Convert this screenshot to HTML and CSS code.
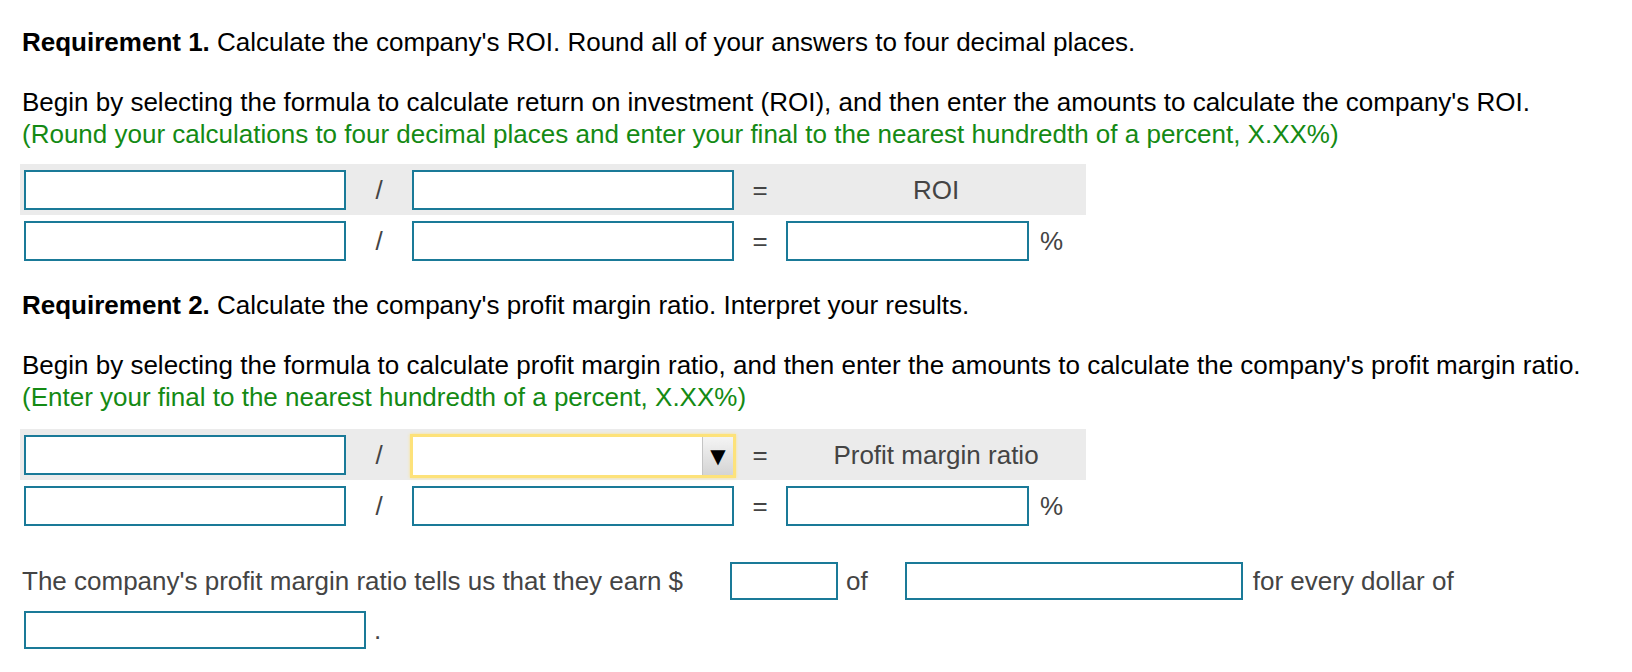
FILE: index.html
```html
<!DOCTYPE html>
<html>
<head>
	<meta charset="utf-8">
	<title>ROI and profit margin ratio</title>
	<link rel="stylesheet" href="styles.css">
</head>
<body>
<div class="page">
	<p class="req"><b>Requirement 1.</b> Calculate the company's ROI. Round all of your answers to four decimal places.</p>
	<p class="intro">Begin by selecting the formula to calculate return on investment (ROI), and then enter the amounts to calculate the company's ROI.</p>
	<p class="hint">(Round your calculations to four decimal places and enter your final to the nearest hundredth of a percent, X.XX%)</p>

	<table class="formula">
		<tr class="head">
			<td class="c1"><span class="box wide"></span></td>
			<td class="op">/</td>
			<td class="c3"><span class="box wide"></span></td>
			<td class="op eq">=</td>
			<td class="label" colspan="2">ROI</td>
		</tr>
		<tr>
			<td class="c1"><span class="box wide"></span></td>
			<td class="op">/</td>
			<td class="c3"><span class="box wide"></span></td>
			<td class="op eq">=</td>
			<td class="c5"><span class="box mid"></span></td>
			<td class="unit">%</td>
		</tr>
	</table>

	<p class="req req2"><b>Requirement 2.</b> Calculate the company's profit margin ratio. Interpret your results.</p>
	<p class="intro">Begin by selecting the formula to calculate profit margin ratio, and then enter the amounts to calculate the company's profit margin ratio.</p>
	<p class="hint">(Enter your final to the nearest hundredth of a percent, X.XX%)</p>

	<table class="formula second">
		<tr class="head">
			<td class="c1"><span class="box wide"></span></td>
			<td class="op">/</td>
			<td class="c3"><span class="select"><span class="arrow">&#9660;</span></span></td>
			<td class="op eq">=</td>
			<td class="label" colspan="2">Profit margin ratio</td>
		</tr>
		<tr>
			<td class="c1"><span class="box wide"></span></td>
			<td class="op">/</td>
			<td class="c3"><span class="box wide"></span></td>
			<td class="op eq">=</td>
			<td class="c5"><span class="box mid"></span></td>
			<td class="unit">%</td>
		</tr>
	</table>

	<p class="answer">The company's profit margin ratio tells us that they earn $<span class="box small"></span>of<span class="box long"></span>for every dollar of <span class="box last"></span><span class="dot">.</span></p>
</div>
</body>
</html>
```

FILE: styles.css
```css
body,p,table{margin:0;padding:0;}
body{background:#fff;color:#000;font:26px/32px "Liberation Sans",Arial,sans-serif;}
.page{padding:26px 22px 0;}
.req b{font-weight:700;}
.intro{margin-top:28px;}
.hint{color:#148a14;}
.req2{margin-top:23px;}

.formula{border-collapse:collapse;margin:14px 0 0 -2px;}
.formula.second{margin-top:16px;}
.formula td{padding:6px 0 5px;vertical-align:top;line-height:40px;}
.formula tr.head{background:#ebebeb;}
.formula .c1{width:322px;padding-left:4px;}
.formula .op{width:66px;text-align:center;color:#444;}
.formula .eq{width:52px;}
.formula .c3{width:322px;}
.formula .c5{width:243px;}
.formula .unit{width:46px;padding-left:11px;color:#444;}
.formula .label{color:#444;text-align:center;}

.box{display:inline-block;box-sizing:border-box;border:2px solid #1a7a98;background:#fff;vertical-align:top;}
.box.wide{width:322px;height:40px;}
.box.mid{width:243px;height:40px;}

.select{display:block;position:relative;box-sizing:border-box;width:326px;height:44px;margin:-1px -2px -3px -2px;border:3px solid #fde27a;background:#fff;box-shadow:0 0 3px #fbe48e;}
.select .arrow{position:absolute;right:0;top:0;width:30px;height:38px;border-left:1px solid #c4c4c4;background:linear-gradient(#f4f4f4,#d4d4d4);color:#000;font:20px/38px "DejaVu Sans",sans-serif;text-align:center;}

.answer{margin-top:26px;color:#444;line-height:49px;}
.answer .box{height:38px;vertical-align:-10px;}
.answer .small{width:108px;margin:0 8px 0 47px;}
.answer .long{width:338px;margin:0 10px 0 37px;}
.answer .last{width:342px;margin-left:2px;}
.answer .dot{margin-left:8px;}
```
